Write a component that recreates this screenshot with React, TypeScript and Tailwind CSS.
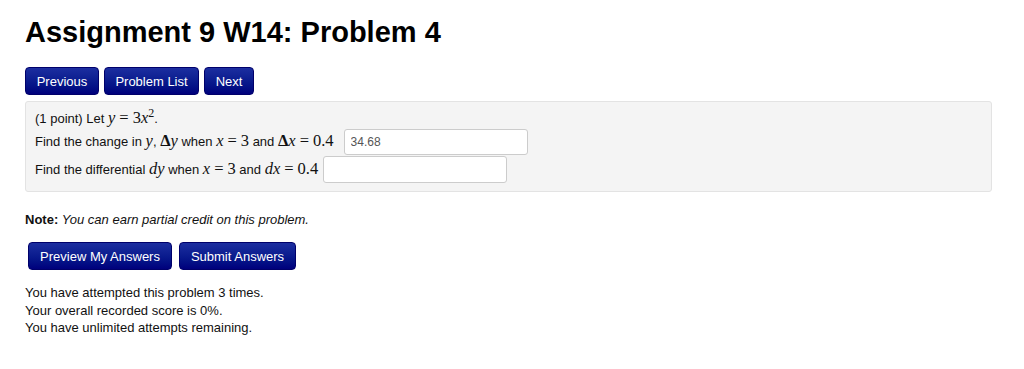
const btn =
  "rounded-[4px] border border-[#00006a] bg-gradient-to-b from-[#1c2ea0] to-[#00007c] text-white text-[13px] leading-none";

function M({ children, i = true }: { children: React.ReactNode; i?: boolean }) {
  return (
    <span className={`font-['Liberation_Serif',serif] text-[16.5px] ${i ? "italic" : ""}`}>{children}</span>
  );
}

function Eq() {
  return <span className="font-['Liberation_Serif',serif] text-[16.5px] mx-[4px]">=</span>;
}

export default function App() {
  return (
    <div className="min-h-[369px] bg-white px-[25px] pt-[15px] font-['Liberation_Sans',Arial,sans-serif] text-[13px] text-[#111]">
      <h1 className="text-[29px] font-bold leading-[34px] text-black">Assignment 9 W14: Problem 4</h1>

      <div className="mt-[18px] flex gap-[5px]">
        <button className={`${btn} h-[28px] w-[74px]`}>Previous</button>
        <button className={`${btn} h-[28px] w-[95px]`}>Problem List</button>
        <button className={`${btn} h-[28px] w-[50px]`}>Next</button>
      </div>

      <div className="mt-[6px] w-[967px] rounded-[3px] border border-[#e3e3e3] bg-[#f4f4f4] px-[9px] pt-[6px] pb-[8px]">
        <div className="h-[20px] leading-[20px]">
          (1 point) Let <M>y</M>
          <Eq />
          <M i={false}>3</M>
          <M>x</M>
          <sup className="font-['Liberation_Serif',serif] text-[12px]">2</sup>.
        </div>
        <div className="flex h-[27px] items-center">
          <span>
            Find the change in <M>y</M>, <M i={false}><b>Δ</b></M>
            <M>y</M> when <M>x</M>
            <Eq />
            <M i={false}>3</M> and <M i={false}><b>Δ</b></M>
            <M>x</M>
            <Eq />
            <M i={false}>0.4</M>
          </span>
          <input
            defaultValue="34.68"
            className="ml-[10px] h-[26px] w-[184px] rounded-[3px] border border-[#cccccc] bg-white px-[6px] text-[12px] text-[#555] outline-none"
          />
        </div>
        <div className="mt-[1px] flex h-[27px] items-center">
          <span>
            Find the differential <M>dy</M> when <M>x</M>
            <Eq />
            <M i={false}>3</M> and <M>dx</M>
            <Eq />
            <M i={false}>0.4</M>
          </span>
          <input className="ml-[5px] h-[27px] w-[184px] rounded-[3px] border border-[#cccccc] bg-white px-[6px] text-[12px] outline-none" />
        </div>
      </div>

      <p className="mt-[20px] leading-[16px]">
        <b>Note:</b> <i>You can earn partial credit on this problem.</i>
      </p>

      <div className="mt-[14px] ml-[3px] flex gap-[7px]">
        <button className={`${btn} h-[28px] w-[144px]`}>Preview My Answers</button>
        <button className={`${btn} h-[28px] w-[117px]`}>Submit Answers</button>
      </div>

      <div className="mt-[14px] leading-[17.5px]">
        <p>You have attempted this problem 3 times.</p>
        <p>Your overall recorded score is 0%.</p>
        <p>You have unlimited attempts remaining.</p>
      </div>
    </div>
  );
}
